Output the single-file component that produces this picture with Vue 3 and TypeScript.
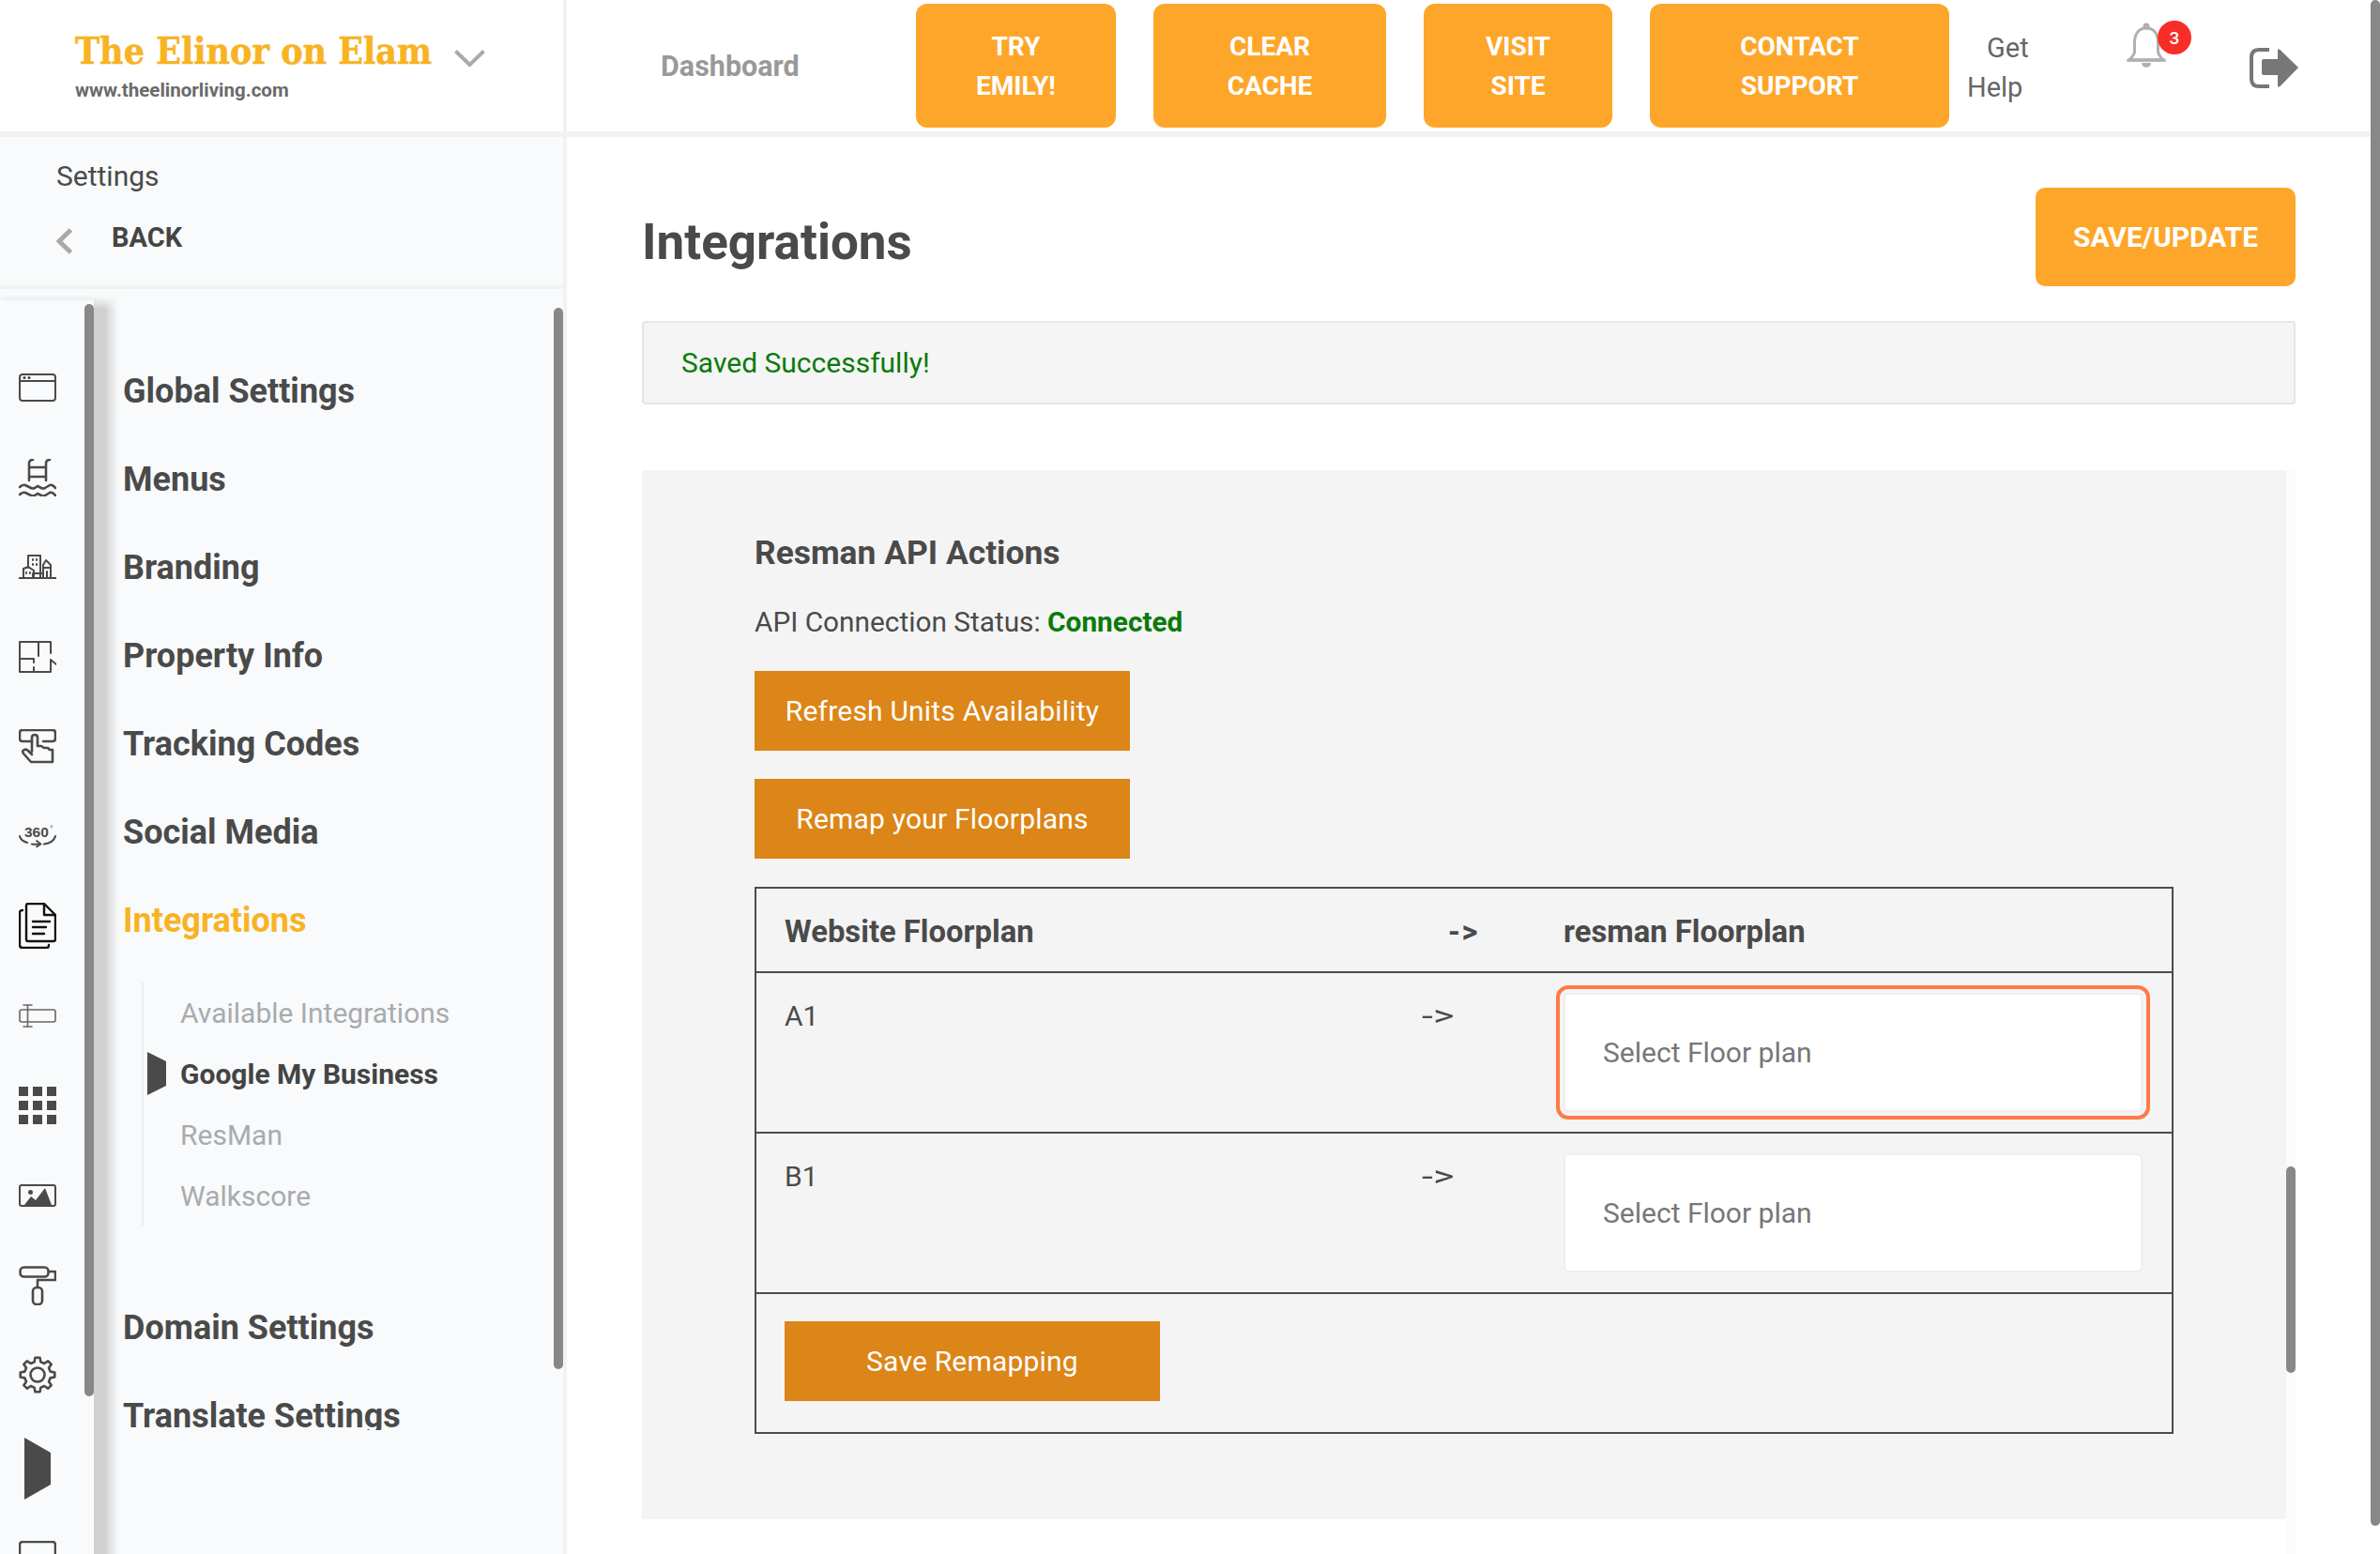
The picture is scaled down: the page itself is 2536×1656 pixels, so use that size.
<script setup lang="ts">
const topButtons = [
  ['TRY', 'EMILY!'],
  ['CLEAR', 'CACHE'],
  ['VISIT', 'SITE'],
  ['CONTACT', 'SUPPORT'],
]
const menuTop = ['Global Settings', 'Menus', 'Branding', 'Property Info', 'Tracking Codes', 'Social Media']
const rows = ['A1', 'B1']

function gearPath(): string {
  const cx = 20, cy = 20, teeth = 8
  const pts: string[] = []
  for (let i = 0; i < teeth; i++) {
    const a = (i / teeth) * Math.PI * 2 - Math.PI / 2
    const step = Math.PI / teeth
    const p = (r: number, t: number) => `${(cx + r * Math.cos(t)).toFixed(1)} ${(cy + r * Math.sin(t)).toFixed(1)}`
    pts.push(`${i === 0 ? 'M' : 'L'}${p(14, a - step * 0.62)}`, `L${p(18.5, a - step * 0.34)}`, `L${p(18.5, a + step * 0.34)}`, `L${p(14, a + step * 0.62)}`)
  }
  return pts.join(' ') + ' Z'
}
const gear = gearPath()
</script>

<template>
  <div class="app">
    <header class="topbar">
      <div class="brand">
        <div class="brand-text">
          <div class="brand-name">The Elinor on Elam</div>
          <div class="brand-url">www.theelinorliving.com</div>
        </div>
        <svg class="brand-chevron" viewBox="0 0 33 18" width="33" height="18"><path d="M1.500 1.500 L16.500 16 L31.500 1.500" fill="none" stroke="#aaaaaa" stroke-width="4" /></svg>
      </div>
      <nav class="topnav">
        <span class="dash">Dashboard</span>
        <div class="top-buttons">
          <button v-for="b in topButtons" :key="b[0]" class="top-btn"><span>{{ b[0] }}</span><span>{{ b[1] }}</span></button>
        </div>
        <div class="help"><span class="help-get">Get</span><span>Help</span></div>
        <div class="bell">
          <svg viewBox="0 0 44 50" width="44" height="50">
            <circle cx="21" cy="4" r="3.600" fill="#b0b0b0" />
            <path d="M21 6 C12 6 8.500 13 8.500 22 V31 Q8.500 34 3 40 H39 Q33.500 34 33.500 31 V22 C33.500 13 30 6 21 6Z" fill="none" stroke="#b0b0b0" stroke-width="3" />
            <path d="M2 40 H40" stroke="#b0b0b0" stroke-width="3.500" stroke-linecap="round" />
            <path d="M16 43 H26 A5 5 0 0 1 16 43Z" fill="#b0b0b0" />
          </svg>
          <span class="badge">3</span>
        </div>
        <svg class="logout" viewBox="0 0 52 43" width="52" height="43">
          <path d="M21 2 H10 Q2 2 2 10 V33 Q2 41 10 41 H21" fill="none" stroke="#777777" stroke-width="4" />
          <path d="M15 12 H30 V3 Q30 0 32.500 2 L52 21 L32.500 41 Q30 43 30 40 V29 H15 Q13 29 13 27 V14 Q13 12 15 12Z" fill="#777777" />
        </svg>
      </nav>
    </header>

    <div class="body">
      <aside class="sidebar">
        <div class="side-head">
          <div class="side-title">Settings</div>
          <div class="side-back">
            <svg viewBox="0 0 18 28" width="18" height="28"><path d="M15.500 2 L3 14 L15.500 26" fill="none" stroke="#aaaaaa" stroke-width="5" /></svg>
            <span>BACK</span>
          </div>
        </div>
        <div class="side-nav">
          <div class="rail">
            <div class="slot">
              <svg viewBox="0 0 40 30" width="40" height="30" class="ic"><rect x="1" y="1" width="38" height="28" rx="3" /><path d="M1 8 H39" /><circle cx="6" cy="4.500" r="1.600" class="solid" /><circle cx="11" cy="4.500" r="1.600" class="solid" /></svg>
            </div>
            <div class="slot">
              <svg viewBox="0 0 40 40" width="40" height="40" class="ic thick"><path d="M11 23 V5 Q11 1 15 1 M29 23 V5 Q29 1 33 1 M11 9 H29 M11 19 H29" /><path d="M1 30 Q4 27 7 28 L13 31 Q15 32 17 31 L20 29 L24 31 Q26 32 28 31 L33 28 Q36 27 39 31" /><path d="M1 38 Q4 35 7 36 L13 39 Q15 40 17 39 L20 37 L24 39 Q26 40 28 39 L33 36 Q36 35 39 39" /></svg>
            </div>
            <div class="slot">
              <svg viewBox="0 0 40 26" width="40" height="26" class="ic"><path d="M0 25 H40" /><path d="M10 14 V1 H23 V25" /><path d="M5 25 V15 L10 13 L16 17 V25" /><path d="M15 25 V20 H26 V25" /><path d="M26 20 V11 L29 6 L34 11 V25" /><path d="M26 14 H34" /><path d="M15 5 V6 M19 5 V6 M15 10 V11 M19 10 V11 M8 19 V20 M12 19 V20 M30 18 V25" /></svg>
            </div>
            <div class="slot">
              <svg viewBox="0 0 40 34" width="40" height="34" class="ic"><path d="M34 21 V33 H1 V1 H34 V13" /><path d="M21 1 V16" /><path d="M1 19 H16 V23" /><path d="M16 28 V33" /><path d="M34 20 L40 25" /></svg>
            </div>
            <div class="slot">
              <svg viewBox="0 0 40 37" width="40" height="37" class="ic thick"><path d="M14 13 H4 Q1 13 1 10 V4 Q1 1 4 1 H36 Q39 1 39 4 V10 Q39 13 36 13 H26" /><path d="M14 24 V9 Q14 6 17 6 Q20 6 20 9 V18 L24 18 L27 20 L31 20 L33 22 L36 22 V35 H13 L5 26 Q3 23 6 22 Q8 21 10 23 L14 27" /></svg>
            </div>
            <div class="slot">
              <svg viewBox="0 0 40 24" width="40" height="24" class="ic"><text x="6" y="12.500" class="ic-text">360</text><text x="33" y="7" class="ic-deg">°</text><path d="M1 12 Q2 17 9 19 M14 20.500 Q18 21 21 20.500 M27 20.500 Q37 19 39 12" stroke-width="2.200" /><path d="M19 17 L23.500 20.500 L19 23.500" stroke-width="1.800" /></svg>
            </div>
            <div class="slot">
              <svg viewBox="0 0 40 49" width="40" height="49" class="ic black"><path d="M27 1 H10 Q8 1 8 3 V39 Q8 41 10 41 H37 Q39 41 39 39 V13 Z" /><path d="M27 1 V13 H39" /><path d="M15 20 H33 M15 26 H29 M15 33 H27" /><path d="M4 8 Q1 8 1 11 V45 Q1 48 4 48 H30 Q32 48 32 45" /></svg>
            </div>
            <div class="slot">
              <svg viewBox="0 0 40 25" width="40" height="25" class="ic thin"><path d="M9 6 H3 Q1 6 1 8 V17 Q1 19 3 19 H9 H37 Q39 19 39 17 V8 Q39 6 37 6 H9" /><path d="M9.500 1 V24 M5 1 H14 M5 24 H14" /></svg>
            </div>
            <div class="slot">
              <div class="dots"><i v-for="n in 9" :key="n"></i></div>
            </div>
            <div class="slot">
              <svg viewBox="0 0 40 24" width="40" height="24" class="ic"><rect x="1" y="1" width="38" height="22" rx="2" /><circle cx="12.500" cy="8.500" r="2.500" class="solid" /><path d="M6 22 L13 13 L18 17 L28 4 L35 22 Z" class="solid" /></svg>
            </div>
            <div class="slot">
              <svg viewBox="0 0 40 42" width="40" height="42" class="ic thick"><rect x="1.500" y="1.500" width="30" height="10" rx="4" /><path d="M32 6 H39 V15 H20 V23" /><rect x="15" y="23" width="10" height="18" rx="4" /></svg>
            </div>
            <div class="slot">
              <svg viewBox="0 0 40 40" width="40" height="40" class="ic thick"><path :d="gear" /><circle cx="20" cy="20" r="7.500" /></svg>
            </div>
            <div class="slot slot-marker">
              <svg viewBox="0 0 28 66" width="28" height="66"><path d="M0 0 L28 16 V50 L0 66 Z" fill="#4a4a4a" /></svg>
            </div>
            <div class="slot">
              <svg viewBox="0 0 40 30" width="40" height="30" class="ic thick"><rect x="1" y="1" width="38" height="28" rx="3" /></svg>
            </div>
            <div class="rail-thumb"></div>
          </div>
          <div class="rail-shade"></div>
          <div class="menu">
            <div v-for="m in menuTop" :key="m" class="menu-item">{{ m }}</div>
            <div class="menu-item active">Integrations</div>
            <div class="sub">
              <div class="sub-item">Available Integrations</div>
              <div class="sub-item current">Google My Business</div>
              <div class="sub-item">ResMan</div>
              <div class="sub-item">Walkscore</div>
            </div>
            <div class="menu-item">Domain Settings</div>
            <div class="menu-item">Translate Settings</div>
          </div>
          <div class="menu-thumb"></div>
        </div>
      </aside>

      <main class="main">
        <div class="page-head">
          <h1>Integrations</h1>
          <button class="save">SAVE/UPDATE</button>
        </div>
        <div class="alert">Saved Successfully!</div>
        <section class="panel">
          <h2>Resman API Actions</h2>
          <p class="status">API Connection Status: <strong>Connected</strong></p>
          <button class="act first">Refresh Units Availability</button>
          <button class="act second">Remap your Floorplans</button>
          <div class="table">
            <div class="row head">
              <div class="c1">Website Floorplan</div>
              <div class="c2 head-arrow">-&gt;</div>
              <div class="c3">resman Floorplan</div>
            </div>
            <div v-for="(r, i) in rows" :key="r" class="row body-row">
              <div class="c1">{{ r }}</div>
              <div class="c2"><span class="arrow">-&gt;</span></div>
              <div class="c3">
                <div class="select" :class="{ focused: i === 0 }">Select Floor plan</div>
              </div>
            </div>
            <div class="foot"><button class="act">Save Remapping</button></div>
          </div>
        </section>
        <div class="main-track"><div class="main-thumb"></div></div>
      </main>
    </div>
    <div class="page-thumb"></div>
  </div>
</template>

<style>
html, body { margin: 0; padding: 0; background: #fff; overflow: hidden; }
</style>

<style scoped>
.app {
  width: 2536px;
  height: 1656px;
  overflow: hidden;
  position: relative;
  display: flex;
  flex-direction: column;
  font-family: Roboto, "Liberation Sans", sans-serif;
  color: #4a4a4a;
  background: #fff;
}
button { font-family: inherit; border: 0; cursor: pointer; }
.topbar {
  height: 146px;
  box-sizing: border-box;
  border-bottom: 6px solid #f2f2f2;
  display: flex;
  flex: none;
}
.brand {
  width: 604px;
  box-sizing: border-box;
  border-right: 4px solid #f2f2f2;
  padding: 31px 0 0 80px;
  display: flex;
  align-items: flex-start;
}
.brand-name {
  font-family: "DejaVu Serif", serif;
  font-stretch: condensed;
  font-weight: 700;
  font-size: 39px;
  line-height: 46px;
  color: #f8b323;
  -webkit-text-stroke: .5px #f8b323;
  white-space: nowrap;
}
.brand-url { font-size: 20.500px; font-weight: 700; line-height: 22px; margin-top: 8px; color: #6a6a6a; }
.brand-chevron { margin: 22px 0 0 24px; }
.topnav { flex: 1; display: flex; align-items: flex-start; min-width: 0; }
.dash { font-size: 30.500px; font-weight: 700; color: #999; margin: 53px 0 0 100px; width: 148px; white-space: nowrap; }
.top-buttons { display: grid; grid-template-columns: 213px 248px 201px 319px; gap: 40px; margin: 4px 0 0 124px; }
.top-btn {
  height: 132px;
  border-radius: 12px;
  background: #fea62a;
  color: #fff;
  font-size: 28px;
  font-weight: 700;
  display: flex;
  flex-direction: column;
  align-items: center;
  justify-content: center;
  gap: 8px;
  line-height: 34px;
  padding: 2px 0 0;
}
.help { display: flex; flex-direction: column; font-size: 29px; line-height: 42px; color: #666; margin: 30px 0 0 19px; width: 65px; }
.help-get { padding-left: 21px; }
.bell { position: relative; margin: 24px 0 0 105px; width: 44px; height: 50px; }
.bell svg { display: block; }
.badge {
  position: absolute;
  left: 33px;
  top: -2px;
  width: 36px;
  height: 36px;
  border-radius: 50%;
  background: #f72e27;
  color: #fff;
  font-size: 19px;
  font-weight: 500;
  display: flex;
  align-items: center;
  justify-content: center;
}
.logout { margin: 51px 0 0 87px; }

.body { flex: 1; display: flex; min-height: 0; }
.sidebar {
  width: 604px;
  flex: none;
  box-sizing: border-box;
  border-right: 4px solid #f2f2f2;
  background: #f8fafb;
  display: flex;
  flex-direction: column;
}
.side-head { height: 162px; flex: none; box-sizing: border-box; border-bottom: 4px solid #f1f2f2; padding: 22px 0 0 60px; }
.side-title { font-size: 30px; line-height: 40px; color: #4a4a4a; }
.side-back { display: flex; align-items: center; margin-top: 25px; gap: 41px; font-size: 29px; font-weight: 700; line-height: 40px; color: #444; }
.side-back svg { margin-top: 8px; }
.side-nav { flex: 1; display: flex; min-height: 0; position: relative; overflow: hidden; }
.rail { width: 100px; flex: none; position: relative; margin-top: 12px; box-sizing: border-box; padding: 45px 0 0 20px; box-shadow: 0 -2px 6px rgba(0, 0, 0, .08); }
.slot { height: 95.700px; width: 40px; display: flex; align-items: center; justify-content: center; }
.slot-marker { padding-top: 8px; box-sizing: border-box; }
.slot svg { display: block; flex: none; }
.ic { fill: none; stroke: #4a4a4a; stroke-width: 2; stroke-linejoin: round; stroke-linecap: round; }
.ic.thick { stroke-width: 2.600; }
.ic.thin { stroke-width: 1.600; stroke: #666; }
.ic.black { stroke: #111; stroke-width: 2.400; }
.ic .solid { fill: #4a4a4a; stroke: none; }
.ic-text { font-family: "Liberation Sans", sans-serif; font-size: 15.500px; font-weight: 700; fill: #4a4a4a; stroke: none; }
.ic-deg { font-family: "Liberation Sans", sans-serif; font-size: 9px; fill: #4a4a4a; stroke: none; }
.dots { display: grid; grid-template-columns: repeat(3, 10px); gap: 5px; }
.dots i { width: 10px; height: 10px; background: #4a4a4a; display: block; }
.rail-thumb { position: absolute; right: 0; top: 4px; width: 10px; height: 1164px; border-radius: 5px; background: #888; }
.rail-shade {
  width: 26px;
  flex: none;
  margin-top: 8px;
  background: linear-gradient(to right, #d0d0d0 0, #d0d0d0 45%, #f8fafb 100%);
  -webkit-mask-image: linear-gradient(to bottom, transparent 0, #000 14px);
  mask-image: linear-gradient(to bottom, transparent 0, #000 14px);
}
.menu { width: 400px; margin-top: 62px; box-sizing: border-box; padding-left: 5px; overflow: hidden; flex: none; height: 1154px; }
.menu-item { height: 94px; display: flex; align-items: center; font-size: 36px; font-weight: 700; color: #4a4a4a; white-space: nowrap; }
.menu-item.active { color: #f8b323; }
.sub { margin: 19px 0 62px 20px; height: 259px; box-sizing: border-box; border-left: 2px solid #eceeef; padding-left: 39px; }
.sub-item { height: 65px; display: flex; align-items: center; font-size: 30px; color: #a8abae; white-space: nowrap; position: relative; }
.sub-item.current { font-weight: 700; color: #444; }
.sub-item.current::before {
  content: "";
  position: absolute;
  left: -35px;
  top: 9px;
  width: 20px;
  height: 46px;
  background: #4a4a4a;
  clip-path: polygon(0 0, 100% 22%, 100% 78%, 0 100%);
}
.menu-thumb { position: absolute; left: 590px; top: 20px; width: 10px; height: 1131px; border-radius: 5px; background: #888; }

.main { flex: 1; position: relative; min-width: 0; box-sizing: border-box; padding: 54px 90px 0 80px; }
.page-head { display: flex; justify-content: space-between; align-items: flex-start; height: 142px; }
h1 { margin: 27px 0 0; font-size: 53px; line-height: 62px; font-weight: 700; color: #4a4a4a; }
.save { width: 277px; height: 105px; border-radius: 10px; background: #fea62a; color: #fff; font-size: 30px; font-weight: 700; padding: 0; }
.alert { height: 89px; box-sizing: border-box; border: 2px solid #e6e6e6; border-radius: 4px; background: #f5f5f5; padding: 0 40px; display: flex; align-items: center; color: #0b7a0b; font-size: 30px; }
.panel { width: 1752px; height: 1118px; margin-top: 70px; box-sizing: border-box; background: #f4f4f4; padding: 61px 120px 0; }
h2 { margin: 0; font-size: 35.400px; line-height: 54px; font-weight: 700; color: #4a4a4a; }
.status { margin: 27px 0 0; font-size: 29.800px; line-height: 40px; color: #4a4a4a; }
.status strong { color: #0b7a0b; font-weight: 700; }
.act { display: block; width: 400px; height: 85px; background: #dc8518; color: #fff; font-size: 30px; letter-spacing: .2px; padding: 0; text-align: center; }
.act.first { margin-top: 32px; }
.act.second { margin-top: 30px; }
.table { width: 1512px; margin-top: 30px; box-sizing: border-box; border: 2px solid #4c4c4c; height: 583px; }
.row { display: grid; grid-template-columns: 709px 151px 1fr; border-bottom: 2px solid #4c4c4c; box-sizing: border-box; }
.row.head { height: 90px; align-items: center; font-size: 32.800px; font-weight: 700; padding-top: 3px; }
.row .c1 { padding-left: 30px; }
.row.head .head-arrow { padding-left: 28px; letter-spacing: 1.500px; }
.row.body-row { height: 171px; font-size: 30px; }
.body-row .c1, .body-row .c2 { padding-top: 26px; line-height: 40px; }
.body-row .arrow { display: inline-block; font-size: 32px; line-height: 36px; transform: scaleX(1.35); transform-origin: left center; }
.c3 { min-width: 0; }
.select {
  width: 617px;
  height: 127px;
  margin-top: 21px;
  box-sizing: border-box;
  background: #fff;
  border: 2px solid #eeeeee;
  border-radius: 6px;
  padding-left: 40px;
  display: flex;
  align-items: center;
  color: #777;
  font-size: 30px;
}
.select.focused { outline: 4px solid #ff7a45; outline-offset: 4px; border-radius: 5px; }
.foot { padding: 29px 0 0 30px; }
.main-track { position: absolute; left: 1832px; top: 355px; bottom: 0; width: 10px; background: #fbfcfd; }
.main-thumb { position: absolute; top: 742px; left: 0; width: 10px; height: 220px; border-radius: 5px; background: #888; }
.page-thumb { position: absolute; right: 0; top: 0; width: 10px; height: 1626px; border-radius: 5px; background: #888; }
</style>
